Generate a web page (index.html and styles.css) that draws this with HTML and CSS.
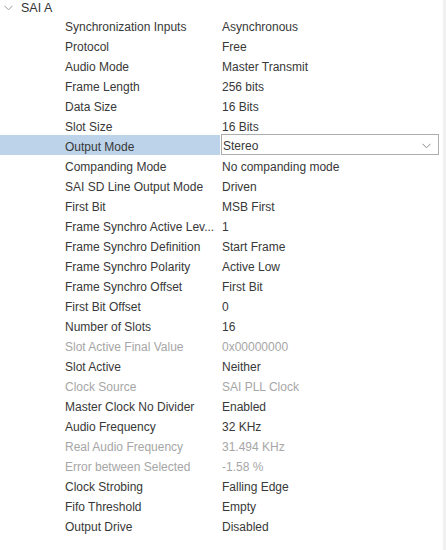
FILE: index.html
```html
<!DOCTYPE html>
<html lang="en">
<head>
  <meta charset="UTF-8">
  <title>SAI A</title>
  <link rel="stylesheet" href="styles.css">
</head>
<body>
  <div class="panel">
    <div class="group">
      <span class="chevron">
        <svg width="9" height="6" viewBox="0 0 9 6"><path d="M0.5 0.8 L4.5 4.8 L8.5 0.8" fill="none" stroke="#9a9a9a" stroke-width="1"/></svg>
      </span>
      <span class="group-title">SAI A</span>
    </div>
    <div class="props">
      <div class="row"><div class="name">Synchronization Inputs</div><div class="value">Asynchronous</div></div>
      <div class="row"><div class="name">Protocol</div><div class="value">Free</div></div>
      <div class="row"><div class="name">Audio Mode</div><div class="value">Master Transmit</div></div>
      <div class="row"><div class="name">Frame Length</div><div class="value">256 bits</div></div>
      <div class="row"><div class="name">Data Size</div><div class="value">16 Bits</div></div>
      <div class="row"><div class="name">Slot Size</div><div class="value">16 Bits</div></div>
      <div class="row selected">
        <div class="name">Output Mode</div>
        <div class="value">
          <div class="select">
            <span>Stereo</span>
            <svg width="9" height="6" viewBox="0 0 9 6"><path d="M0.5 0.8 L4.5 4.8 L8.5 0.8" fill="none" stroke="#8a8a8a" stroke-width="1"/></svg>
          </div>
        </div>
      </div>
      <div class="row"><div class="name">Companding Mode</div><div class="value">No companding mode</div></div>
      <div class="row"><div class="name">SAI SD Line Output Mode</div><div class="value">Driven</div></div>
      <div class="row"><div class="name">First Bit</div><div class="value">MSB First</div></div>
      <div class="row"><div class="name">Frame Synchro Active Lev...</div><div class="value">1</div></div>
      <div class="row"><div class="name">Frame Synchro Definition</div><div class="value">Start Frame</div></div>
      <div class="row"><div class="name">Frame Synchro Polarity</div><div class="value">Active Low</div></div>
      <div class="row"><div class="name">Frame Synchro Offset</div><div class="value">First Bit</div></div>
      <div class="row"><div class="name">First Bit Offset</div><div class="value">0</div></div>
      <div class="row"><div class="name">Number of Slots</div><div class="value">16</div></div>
      <div class="row disabled"><div class="name">Slot Active Final Value</div><div class="value">0x00000000</div></div>
      <div class="row"><div class="name">Slot Active</div><div class="value">Neither</div></div>
      <div class="row disabled"><div class="name">Clock Source</div><div class="value">SAI PLL Clock</div></div>
      <div class="row"><div class="name">Master Clock No Divider</div><div class="value">Enabled</div></div>
      <div class="row"><div class="name">Audio Frequency</div><div class="value">32 KHz</div></div>
      <div class="row disabled"><div class="name">Real Audio Frequency</div><div class="value">31.494 KHz</div></div>
      <div class="row disabled"><div class="name">Error between Selected</div><div class="value">-1.58 %</div></div>
      <div class="row"><div class="name">Clock Strobing</div><div class="value">Falling Edge</div></div>
      <div class="row"><div class="name">Fifo Threshold</div><div class="value">Empty</div></div>
      <div class="row"><div class="name">Output Drive</div><div class="value">Disabled</div></div>
    </div>
  </div>
</body>
</html>
```

FILE: styles.css
```css
body {
  margin: 0;
  background: #fff;
  font-family: "Liberation Sans", Arial, sans-serif;
  font-size: 12px;
  color: #383838;
}
.panel {
  width: 443px;
  height: 550px;
  border-right: 3px solid #f1f1f1;
  overflow: hidden;
}
.group {
  display: flex;
  align-items: center;
  height: 15px;
  padding-top: 1px;
  box-sizing: border-box;
}
.chevron {
  display: flex;
  width: 9px;
  margin-left: 4px;
  margin-right: 8px;
}
.group-title {
  color: #333;
  font-size: 12.5px;
}
.props {
  display: flex;
  flex-direction: column;
}
.row {
  display: flex;
  height: 20px;
}
.name,
.value {
  height: 20px;
  box-sizing: border-box;
  padding-top: 4px;
  line-height: 16px;
  white-space: nowrap;
}
.name {
  width: 221px;
  padding-left: 65px;
  overflow: hidden;
}
.value {
  flex: 1;
  padding-left: 1px;
}
.row.disabled {
  color: #a6a6a6;
}
.row.selected .name {
  background: #bcd3ea;
  width: 220px;
  margin-right: 1px;
}
.row.selected .value {
  padding-top: 0;
  padding-left: 0;
}
.select {
  display: flex;
  align-items: center;
  justify-content: space-between;
  width: 218px;
  height: 21px;
  margin-top: -1px;
  box-sizing: border-box;
  border: 1px solid #acacac;
  padding: 3px 7px 0 1px;
  background: #fff;
}
```
